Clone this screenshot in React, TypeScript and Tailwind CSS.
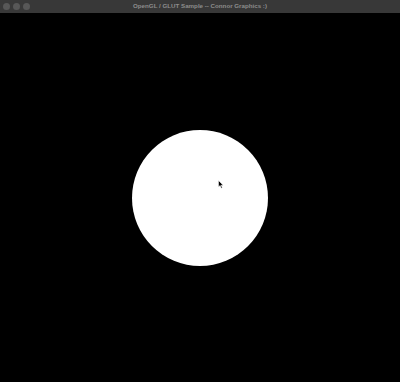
export default function App() {
  return (
    <div className="flex h-[382px] w-[400px] flex-col overflow-hidden bg-black">
      <div className="relative flex h-[13px] shrink-0 items-center justify-center bg-[#383838]">
        <div className="absolute left-[3px] top-[3px] flex gap-[3px]">
          <span className="h-[7px] w-[7px] rounded-full bg-[#575757]" />
          <span className="h-[7px] w-[7px] rounded-full bg-[#575757]" />
          <span className="h-[7px] w-[7px] rounded-full bg-[#575757]" />
        </div>
        <span className="font-['Liberation_Sans',sans-serif] text-[6.2px] font-bold leading-none text-[#8c8c8c]">
          OpenGL / GLUT Sample -- Connor Graphics :)
        </span>
      </div>
      <div className="flex flex-1 items-start justify-center pt-[117px]">
        <div className="relative h-[136px] w-[136px] rounded-full bg-white">
          <svg
            className="absolute left-[86px] top-[50px]"
            width="6"
            height="9"
            viewBox="0 0 6 9"
          >
            <path d="M0.5 0.5 L0.5 7 L2 5.5 L3.3 8.3 L4.3 7.8 L3.1 5.2 L5.2 5.2 Z" fill="#000" stroke="#fff" strokeWidth="0.5" />
          </svg>
        </div>
      </div>
    </div>
  );
}
